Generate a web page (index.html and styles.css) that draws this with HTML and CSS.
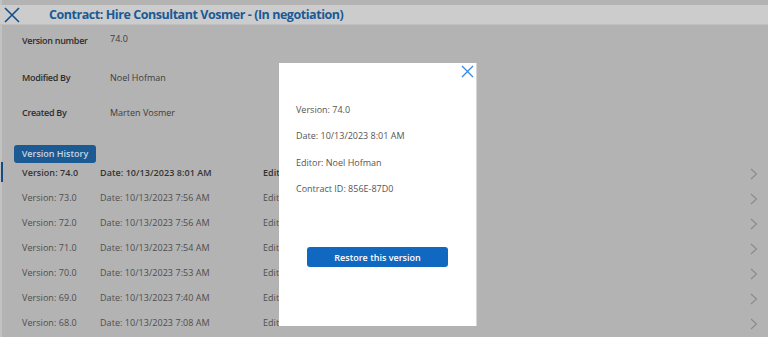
FILE: index.html
```html
<!DOCTYPE html>
<html>
<head>
<meta charset="utf-8">
<link rel="stylesheet" href="styles.css">
</head>
<body>
<div class="page">
  <div class="edge"></div>
  <div class="main">
    <div class="topgap"></div>
    <header class="bar">
      <svg class="close-main" width="16" height="16" viewBox="0 0 16 16"><path d="M1 1L15 15M15 1L1 15" stroke="#134f88" stroke-width="1.6" fill="none"/></svg>
      <h1 class="title">Contract: Hire Consultant Vosmer - (In negotiation)</h1>
    </header>
    <div class="details">
      <div class="drow"><span class="dlabel">Version number</span><span class="dval up">74.0</span></div>
      <div class="drow"><span class="dlabel">Modified By</span><span class="dval">Noel Hofman</span></div>
      <div class="drow"><span class="dlabel">Created By</span><span class="dval">Marten Vosmer</span></div>
    </div>
    <div class="vh-wrap"><span class="vh-btn">Version History</span></div>
    <ul class="versions">
      <li class="vrow sel"><span class="vc">Version: 74.0</span><span class="dc">Date: 10/13/2023 8:01 AM</span><span class="ec">Editor: Noel Hofman</span><svg class="chev" width="8" height="12" viewBox="0 0 8 12"><path d="M1 1L6.5 6L1 11" stroke="#8a8a8a" stroke-width="1.1" fill="none"/></svg></li>
      <li class="vrow"><span class="vc">Version: 73.0</span><span class="dc">Date: 10/13/2023 7:56 AM</span><span class="ec">Editor: Noel Hofman</span><svg class="chev" width="8" height="12" viewBox="0 0 8 12"><path d="M1 1L6.5 6L1 11" stroke="#8a8a8a" stroke-width="1.1" fill="none"/></svg></li>
      <li class="vrow"><span class="vc">Version: 72.0</span><span class="dc">Date: 10/13/2023 7:56 AM</span><span class="ec">Editor: Noel Hofman</span><svg class="chev" width="8" height="12" viewBox="0 0 8 12"><path d="M1 1L6.5 6L1 11" stroke="#8a8a8a" stroke-width="1.1" fill="none"/></svg></li>
      <li class="vrow"><span class="vc">Version: 71.0</span><span class="dc">Date: 10/13/2023 7:54 AM</span><span class="ec">Editor: Noel Hofman</span><svg class="chev" width="8" height="12" viewBox="0 0 8 12"><path d="M1 1L6.5 6L1 11" stroke="#8a8a8a" stroke-width="1.1" fill="none"/></svg></li>
      <li class="vrow"><span class="vc">Version: 70.0</span><span class="dc">Date: 10/13/2023 7:53 AM</span><span class="ec">Editor: Noel Hofman</span><svg class="chev" width="8" height="12" viewBox="0 0 8 12"><path d="M1 1L6.5 6L1 11" stroke="#8a8a8a" stroke-width="1.1" fill="none"/></svg></li>
      <li class="vrow"><span class="vc">Version: 69.0</span><span class="dc">Date: 10/13/2023 7:40 AM</span><span class="ec">Editor: Noel Hofman</span><svg class="chev" width="8" height="12" viewBox="0 0 8 12"><path d="M1 1L6.5 6L1 11" stroke="#8a8a8a" stroke-width="1.1" fill="none"/></svg></li>
      <li class="vrow"><span class="vc">Version: 68.0</span><span class="dc">Date: 10/13/2023 7:08 AM</span><span class="ec">Editor: Noel Hofman</span><svg class="chev" width="8" height="12" viewBox="0 0 8 12"><path d="M1 1L6.5 6L1 11" stroke="#8a8a8a" stroke-width="1.1" fill="none"/></svg></li>
    </ul>
  </div>
  <div class="modal">
    <svg class="close-modal" width="13" height="13" viewBox="0 0 13 13"><path d="M1 1L12 12M12 1L1 12" stroke="#3a8de0" stroke-width="1.4" fill="none"/></svg>
    <div class="minfo">
      <p>Version: 74.0</p>
      <p>Date: 10/13/2023 8:01 AM</p>
      <p>Editor: Noel Hofman</p>
      <p>Contract ID: 856E-87D0</p>
    </div>
    <button class="restore">Restore this version</button>
  </div>
</div>
</body>
</html>
```
FILE: styles.css
```css
* { box-sizing: border-box; }
html, body { margin: 0; padding: 0; }
body {
  background: #b3b3b3;
  font-family: "Open Sans", "Noto Sans", sans-serif;
  width: 768px;
  height: 337px;
  overflow: hidden;
}
.page { position: relative; display: flex; width: 768px; height: 337px; }
.edge { width: 2px; background: #c2c2c2; flex: none; }
.main { flex: 1; min-width: 0; }
.topgap { height: 5px; }
.bar {
  height: 20px;
  background: #cccccc;
  border-bottom: 1px solid #c0c0c0;
  display: flex;
  align-items: center;
  margin-left: -2px;
}
.close-main { margin-left: 4px; flex: none; }
.title {
  margin: 0 0 0 29px;
  font-size: 12.5px;
  font-weight: 700;
  color: #1a5a96;
  letter-spacing: -0.45px;
  white-space: nowrap;
}
.details { padding: 5px 0 0 20px; display: flex; flex-direction: column; gap: 17px; }
.drow { display: flex; align-items: center; height: 20px; font-size: 9px; }
.drow:nth-child(3) { margin-top: -2px; }
.dlabel { width: 88px; font-weight: 600; color: #2e2e2e; letter-spacing: -0.3px; }
.dval { color: #3c3c3c; }
.dval.up { position: relative; top: -2px; }
.vh-wrap { padding: 18px 0 0 12px; height: 38px; }
.vh-btn {
  display: inline-block;
  height: 18px;
  width: 82px;
  line-height: 18px;
  text-align: center;
  background: #1c5a94;
  color: #c9d5e2;
  font-size: 9px;
  font-weight: 600;
  border-radius: 3px;
}
.versions { list-style: none; margin: 0; padding: 0; }
.vrow {
  position: relative;
  display: flex;
  align-items: center;
  height: 25px;
  font-size: 9px;
  letter-spacing: 0.05px;
  color: #4e4e4e;
  padding-left: 20px;
}
.vrow.sel { font-weight: 600; color: #333333; }
.vrow.sel::before {
  content: "";
  position: absolute;
  left: -1px;
  top: 2px;
  width: 2px;
  height: 20px;
  background: #154b80;
}
.vc { width: 78px; flex: none; }
.dc { width: 163px; flex: none; }
.ec { width: 16px; flex: none; overflow: hidden; white-space: nowrap; }
.chev { margin-left: auto; margin-right: 10px; margin-top: 3px; }
.modal {
  position: absolute;
  left: 279px;
  top: 63px;
  width: 198px;
  height: 263px;
  background: #ffffff;
  border-right: 1px solid #d6d6d6;
  display: flex;
  flex-direction: column;
}
.close-modal { position: absolute; right: 2px; top: 2px; }
.minfo { padding: 40px 0 0 17px; font-size: 9px; color: #555555; }
.minfo p { margin: 0; height: 26.3px; line-height: 14px; }
.restore {
  align-self: flex-start;
  margin: 39px 0 0 28px;
  width: 141px;
  height: 20px;
  border: none;
  border-radius: 3px;
  background: #1068c0;
  color: #ffffff;
  font-family: "Open Sans", "Noto Sans", sans-serif;
  font-size: 9px;
  font-weight: 600;
  padding: 0;
}
```
